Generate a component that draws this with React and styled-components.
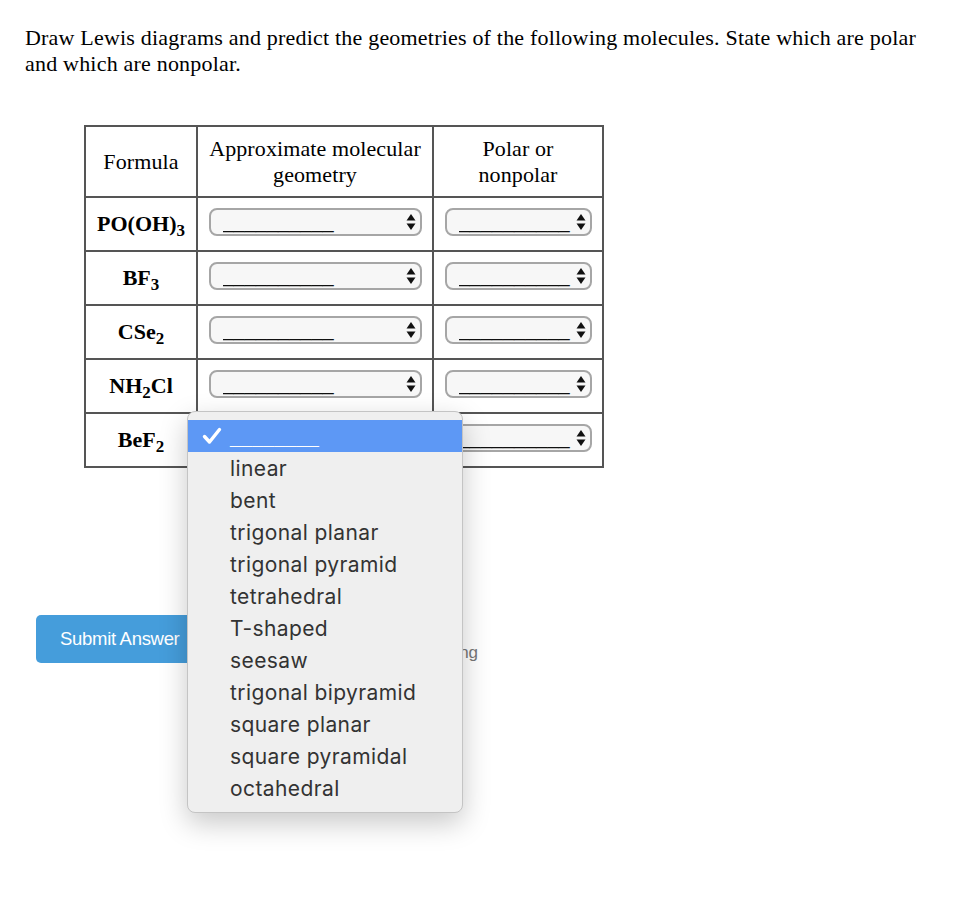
import React from 'react';
import styled, { createGlobalStyle } from 'styled-components';

const GlobalStyle = createGlobalStyle`
  html, body {
    margin: 0;
    padding: 0;
    background: #ffffff;
  }
  body {
    font-family: "Liberation Serif", "Times New Roman", serif;
    color: #000;
  }
`;

const rows = [
  { name: 'PO(OH)', sub: '3', tail: '' },
  { name: 'BF', sub: '3', tail: '' },
  { name: 'CSe', sub: '2', tail: '' },
  { name: 'NH', sub: '2', tail: 'Cl' },
  { name: 'BeF', sub: '2', tail: '' },
];

const options = [
  'linear',
  'bent',
  'trigonal planar',
  'trigonal pyramid',
  'tetrahedral',
  'T-shaped',
  'seesaw',
  'trigonal bipyramid',
  'square planar',
  'square pyramidal',
  'octahedral',
];

const Arrows = () => (
  <svg width="10" height="18" viewBox="0 0 10 18">
    <path d="M5 1 L9.5 7.5 L0.5 7.5 Z" fill="#111" />
    <path d="M5 17 L9.5 10.5 L0.5 10.5 Z" fill="#111" />
  </svg>
);

const Check = () => (
  <svg width="20" height="18" viewBox="0 0 20 18">
    <path d="M2.5 9.5 L7.5 15 L17.5 2.5" fill="none" stroke="#fff" strokeWidth="3.4" strokeLinecap="round" strokeLinejoin="round" />
  </svg>
);

export default function App() {
  return (
    <Page>
      <GlobalStyle />
      <Prompt>
        Draw Lewis diagrams and predict the geometries of the following molecules. State which are polar
        and which are nonpolar.
      </Prompt>

      <Table>
        <colgroup>
          <col style={{ width: 112 }} />
          <col style={{ width: 236 }} />
          <col style={{ width: 170 }} />
        </colgroup>
        <thead>
          <tr>
            <HeadCell>Formula</HeadCell>
            <HeadCell>Approximate molecular<br />geometry</HeadCell>
            <HeadCell>Polar or<br />nonpolar</HeadCell>
          </tr>
        </thead>
        <tbody>
          {rows.map((r) => (
            <tr key={r.name + r.tail}>
              <FormulaCell>
                {r.name}<Sub>{r.sub}</Sub>{r.tail}
              </FormulaCell>
              <SelectCell>
                <FakeSelect $width={213}>
                  <Blank $width={112}>__________</Blank>
                  <Arrows />
                </FakeSelect>
              </SelectCell>
              <SelectCell>
                <FakeSelect $width={147}>
                  <Blank $width={112}>__________</Blank>
                  <Arrows />
                </FakeSelect>
              </SelectCell>
            </tr>
          ))}
        </tbody>
      </Table>

      <Footer>
        <SubmitButton>Submit Answer</SubmitButton>
        <Attempts>10 item attempts remaining</Attempts>
      </Footer>

      <Menu>
        <MenuItem $selected>
          <CheckSlot><Check /></CheckSlot>
          <MenuBlank>________</MenuBlank>
        </MenuItem>
        {options.map((o) => (
          <MenuItem key={o}>
            <CheckSlot />
            {o}
          </MenuItem>
        ))}
      </Menu>
    </Page>
  );
}

const Page = styled.div`
  position: relative;
  width: 972px;
  min-height: 922px;
  padding: 25px 25px 0;
  box-sizing: border-box;
`;

const Prompt = styled.p`
  margin: 0;
  width: 900px;
  font-size: 22px;
  line-height: 26px;
  letter-spacing: 0.2px;
`;

const Table = styled.table`
  margin: 48px 0 0 59px;
  border-collapse: collapse;
  table-layout: fixed;
  width: 518px;
  border: 2px solid #555;
`;

const HeadCell = styled.th`
  height: 69px;
  padding: 0;
  border: 2px solid #555;
  font-weight: normal;
  font-size: 22px;
  line-height: 26px;
  letter-spacing: 0.1px;
  text-align: center;
  vertical-align: middle;
`;

const FormulaCell = styled.td`
  height: 52px;
  padding: 0;
  border: 2px solid #555;
  font-weight: bold;
  font-size: 22px;
  text-align: center;
  vertical-align: middle;
`;

const Sub = styled.sub`
  font-size: 17px;
  line-height: 0;
  vertical-align: -5px;
`;

const SelectCell = styled.td`
  padding: 0;
  border: 2px solid #555;
  text-align: center;
  vertical-align: middle;
`;

const FakeSelect = styled.div`
  display: inline-flex;
  align-items: center;
  justify-content: space-between;
  box-sizing: border-box;
  width: ${(p) => p.$width}px;
  height: 28px;
  margin-bottom: 4px;
  padding: 0 4px 0 12px;
  border: 2px solid #a6a6a6;
  border-radius: 8px;
  background: #f7f7f7;
`;

const Blank = styled.span`
  font-family: "Liberation Sans", Arial, sans-serif;
  font-size: 20px;
  letter-spacing: 0;
  line-height: 20px;
  height: 22px;
  color: #111;
  overflow: hidden;
  white-space: nowrap;
  width: ${(p) => p.$width}px;
  text-align: left;
`;

const Footer = styled.div`
  display: flex;
  align-items: flex-end;
  gap: 47px;
  margin: 147px 0 0 11px;
`;

const SubmitButton = styled.button`
  height: 48px;
  padding: 0 24px;
  width: 190px;
  border: none;
  border-radius: 5px;
  background: #459ddb;
  color: #fff;
  font-family: "Liberation Sans", Arial, sans-serif;
  font-size: 18.5px;
  text-align: left;
  letter-spacing: -0.3px;
`;

const Attempts = styled.span`
  font-family: "Liberation Sans", Arial, sans-serif;
  font-size: 17px;
  color: #777;
  padding-bottom: 0;
`;

const Menu = styled.div`
  position: absolute;
  left: 187px;
  top: 411px;
  width: 276px;
  box-sizing: border-box;
  padding: 8px 0 8px;
  background: #efefef;
  border: 1px solid #c4c4c4;
  border-radius: 8px;
  box-shadow: 0 10px 28px rgba(0, 0, 0, 0.22);
  font-family: Inter, "Liberation Sans", Arial, sans-serif;
  font-size: 21px;
  letter-spacing: 0.4px;
  color: #333;
`;

const MenuItem = styled.div`
  display: flex;
  align-items: center;
  height: 32px;
  background: ${(p) => (p.$selected ? '#5d98f5' : 'transparent')};
  color: ${(p) => (p.$selected ? '#fff' : '#333')};
`;

const CheckSlot = styled.span`
  display: inline-flex;
  width: 42px;
  padding-left: 14px;
  box-sizing: border-box;
`;

const MenuBlank = styled.span`
  font-family: "Liberation Sans", Arial, sans-serif;
  font-size: 20px;
  font-weight: bold;
  margin-top: 2px;
  letter-spacing: 0;
`;
